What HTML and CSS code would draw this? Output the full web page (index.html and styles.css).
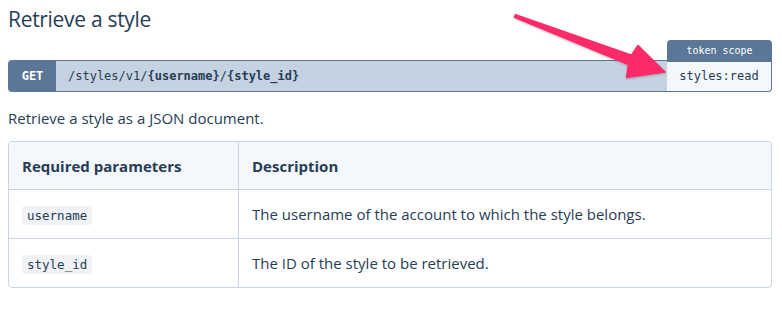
FILE: index.html
```html
<!DOCTYPE html>
<html lang="en">
<head>
  <meta charset="UTF-8" />
  <title>Retrieve a style</title>
  <link rel="stylesheet" href="styles.css">
</head>
<body>
  <main class="doc">
    <h1 class="doc-title">Retrieve a style</h1>

    <div class="endpoint">
      <div class="endpoint-bar">
        <span class="method">GET</span>
        <span class="path">/styles/v1/<b>{username}</b>/<b>{style_id}</b></span>
      </div>
      <div class="scope">
        <div class="scope-label">token scope</div>
        <div class="scope-value">styles:read</div>
      </div>
    </div>

    <p class="doc-desc">Retrieve a style as a JSON document.</p>

    <table class="params">
      <thead>
        <tr>
          <th class="col-name">Required parameters</th>
          <th>Description</th>
        </tr>
      </thead>
      <tbody>
        <tr>
          <td><code>username</code></td>
          <td>The username of the account to which the style belongs.</td>
        </tr>
        <tr>
          <td><code>style_id</code></td>
          <td>The ID of the style to be retrieved.</td>
        </tr>
      </tbody>
    </table>

    <!-- callout arrow pointing at the scope box -->
    <svg class="callout" width="782" height="100" viewBox="0 0 782 100">
      <defs>
        <filter id="soft" x="-10%" y="-20%" width="120%" height="150%">
          <feDropShadow dx="0" dy="1" stdDeviation="1" flood-color="#000" flood-opacity="0.25"/>
        </filter>
      </defs>
      <polygon filter="url(#soft)" fill="#fd2c6b" stroke="#fd2c6b" stroke-width="1.5" stroke-linejoin="round"
        points="515.5,13.6 631.6,54.2 638,44.5 665,71 626.5,76.5 628.4,63.6 514.5,16.4"/>
    </svg>
  </main>
</body>
</html>
```

FILE: styles.css
```css
:root {
  --ink: #273d56;
  --slate: #5a7797;
  --bar: #c5d2e1;
  --pale: #f4f7fb;
  --line: #c9d5e3;
}
* { box-sizing: border-box; }
body {
  margin: 0;
  background: #fff;
  color: var(--ink);
  font-family: 'Open Sans', sans-serif;
}
.doc {
  position: relative;
  padding: 0 10px 0 8px;
}
.doc-title {
  margin: 1px 0 3px;
  font-size: 21px;
  line-height: 36px;
  font-weight: 400;
  letter-spacing: -0.3px;
}
.endpoint {
  display: flex;
  align-items: flex-end;
}
.endpoint-bar {
  flex: 1;
  display: flex;
  height: 32px;
  background: var(--bar);
  border: 1px solid var(--slate);
  border-right: none;
  border-radius: 4px 0 0 4px;
  overflow: hidden;
  font-family: 'DejaVu Sans Mono', monospace;
  font-size: 12px;
}
.method {
  width: 47px;
  background: var(--slate);
  color: #fff;
  font-weight: 700;
  display: flex;
  align-items: center;
  justify-content: center;
}
.path {
  padding-left: 12px;
  display: flex;
  align-items: center;
  color: var(--ink);
}
.path b { font-weight: 700; }
.scope {
  width: 105px;
  font-family: 'DejaVu Sans Mono', monospace;
}
.scope-label {
  height: 22px;
  line-height: 22px;
  background: var(--slate);
  color: #fff;
  font-size: 10px;
  text-align: center;
  border-radius: 4px 4px 0 0;
}
.scope-value {
  height: 30px;
  line-height: 29px;
  background: var(--pale);
  border: 1px solid var(--slate);
  border-top: none;
  border-left: none;
  border-radius: 0 0 4px 0;
  font-size: 12px;
  text-align: center;
  color: var(--ink);
}
.doc-desc {
  margin: 16px 0 13px;
  font-size: 15px;
  line-height: 20px;
}
.params {
  width: 764px;
  border-collapse: separate;
  border-spacing: 0;
  border: 1px solid var(--line);
  border-radius: 4px;
  font-size: 15px;
}
.params th {
  background: var(--pale);
  text-align: left;
  font-weight: 700;
  font-size: 15px;
  height: 48px;
  padding: 0 13px;
  border-bottom: 1px solid var(--line);
}
.params th:first-child { border-radius: 4px 0 0 0; }
.params th:last-child { border-radius: 0 4px 0 0; }
.params .col-name { width: 229px; }
.params th + th,
.params td + td {
  border-left: 1px solid var(--line);
}
.params td {
  height: 49px;
  padding: 0 13px;
  border-bottom: 1px solid var(--line);
}
.params tbody tr:last-child td {
  height: 48px;
  border-bottom: none;
}
.params code {
  font-family: 'DejaVu Sans Mono', monospace;
  font-size: 12.5px;
  background: #f0f2f5;
  border-radius: 3px;
  padding: 2px 5px;
}
.callout {
  position: absolute;
  top: 0;
  left: 0;
  pointer-events: none;
}
```
